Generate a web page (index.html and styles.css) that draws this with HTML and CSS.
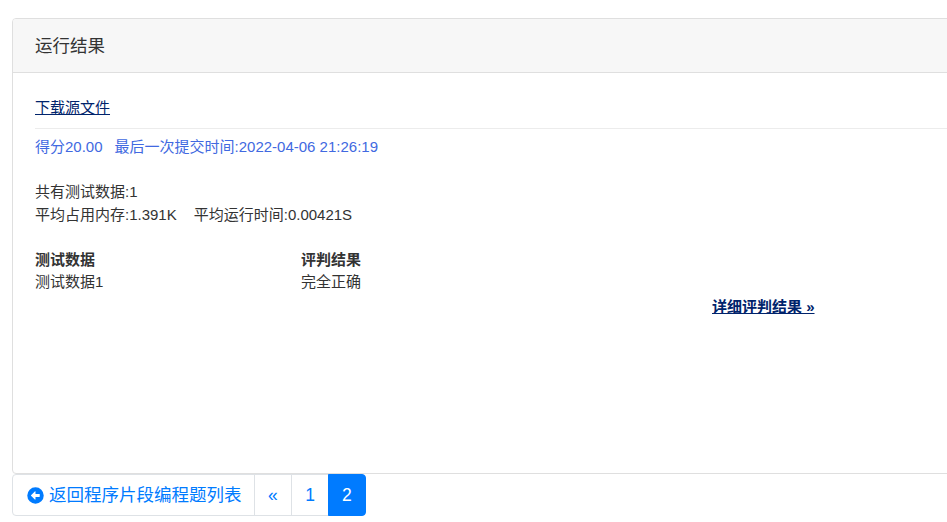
FILE: index.html
```html
<!DOCTYPE html>
<html lang="zh-CN">
<head>
    <meta charset="UTF-8">
    <title>运行结果</title>
    <link rel="stylesheet" href="styles.css">
</head>
<body>
    <div class="page">
        <!-- Result card -->
        <div class="card">
            <div class="card-header">运行结果</div>
            <div class="card-body">
                <p class="download"><a href="#" class="dark-link">下载源文件</a></p>
                <hr class="divider">
                <p class="score"><span class="score-value">得分20.00</span>最后一次提交时间:2022-04-06 21:26:19</p>
                <div class="summary">
                    <p>共有测试数据:1</p>
                    <p><span class="memory">平均占用内存:1.391K</span>平均运行时间:0.00421S</p>
                </div>
                <div class="result-table">
                    <b>测试数据</b><b>评判结果</b>
                    <span>测试数据1</span><span>完全正确</span>
                </div>
                <p class="detail"><a href="#" class="dark-link">详细评判结果 »</a></p>
            </div>
        </div>

        <!-- Pagination -->
        <ul class="pagination">
            <li class="page-item back">
                <svg class="back-icon" viewBox="0 0 512 512" width="17" height="17"><path fill="#007bff" d="M256 8a248 248 0 1 1 0 496 248 248 0 0 1 0-496zm116 204H256v-71c0-11-13-16-20-9L121 247c-5 5-5 12 0 17l115 115c7 8 20 2 20-9v-70h116c7 0 12-5 12-12v-64c0-7-5-12-12-12z"/></svg>
                返回程序片段编程题列表
            </li>
            <li class="page-item prev">«</li>
            <li class="page-item">1</li>
            <li class="page-item active">2</li>
        </ul>
    </div>
</body>
</html>
```

FILE: styles.css
```css
html, body { margin: 0; padding: 0; overflow: hidden; }
body {
    font-family: "Liberation Sans", "Noto Sans CJK SC", sans-serif;
    font-size: 15px;
    line-height: 22.5px;
    color: #333;
    background: #fff;
}
p { margin: 0; }
.page { width: 1140px; height: 522px; padding: 18px 0 0 12px; }

.card { height: 456px; box-sizing: border-box; border: 1px solid #dfdfdf; border-radius: 4px 4px 0 4px; }
.card-header {
    height: 54px;
    box-sizing: border-box;
    padding: 0 22px;
    font-size: 17.5px;
    line-height: 54px;
    background: #f7f7f7;
    border-bottom: 1px solid #dfdfdf;
    border-radius: 3px 3px 0 0;
}
.card-body { padding: 24px 22px 0; }
.dark-link { color: #00236b; text-decoration: underline; }
.divider { margin: 8px 0 7px; border: 0; border-top: 1px solid #ececec; }
.score { color: #4169e1; }
.score-value { margin-right: 12px; }
.summary { margin-top: 23px; }
.memory { margin-right: 17px; }
.result-table { display: grid; grid-template-columns: 266px 266px; grid-auto-rows: 22px; margin-top: 23px; }
.detail { margin: 3px 0 0 677px; font-weight: bold; }

.pagination { display: flex; margin: 0; padding: 0; list-style: none; height: 42px; }
.page-item {
    display: flex;
    align-items: center;
    box-sizing: border-box;
    padding: 0 13px;
    margin-left: -1px;
    color: #007bff;
    font-size: 17.5px;
    border: 1px solid #dee2e6;
}
.page-item.back { margin-left: 0; padding: 0 12px 0 14px; gap: 5px; border-radius: 4px 0 0 4px; }
.page-item.prev { padding: 0 13.5px; }
.page-item.active { color: #fff; background: #007bff; border-color: #007bff; border-radius: 0 4px 4px 0; }
.back-icon { flex: none; }
```
